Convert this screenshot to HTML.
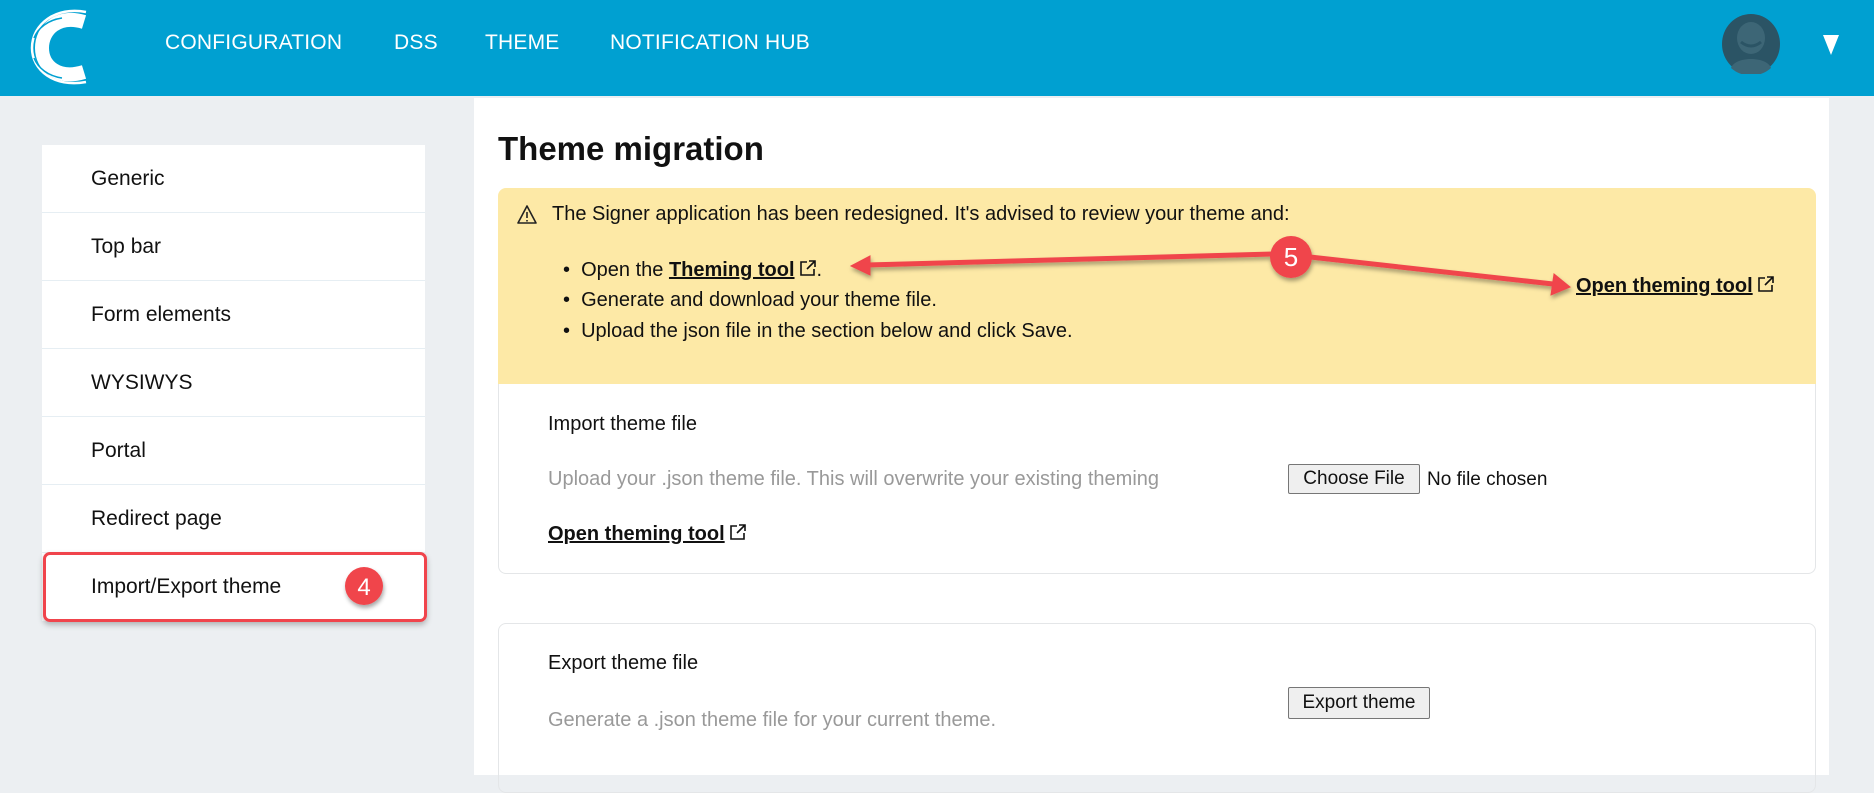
<!DOCTYPE html>
<html><head><meta charset="utf-8"><style>
*{box-sizing:border-box;margin:0;padding:0}
body{width:1874px;height:775px;overflow:hidden;background:#eceff2;font-family:"Liberation Sans",sans-serif;color:#111;position:relative}
.hdr{position:absolute;left:0;top:0;width:1874px;height:96px;background:#00a0d1}
.nav{position:absolute;top:31px;color:#fff;font-size:21px;letter-spacing:0.2px}
.side{position:absolute;left:42px;top:145px;width:383px;background:#fff}
.side div{height:68px;border-bottom:1px solid #e6eef3;font-size:21px;padding-left:49px;line-height:68px}
.main{position:absolute;left:474px;top:98px;width:1355px;height:677px;background:#fff}
.abs{position:absolute}
.alert{position:absolute;left:498px;top:188px;width:1318px;height:196px;background:#fde9a6;border-radius:8px 8px 0 0}
.t20{font-size:20px}
.card{position:absolute;left:498px;width:1318px;border:1px solid #e4e6e8;border-radius:8px}
a{color:#111;font-weight:bold;text-decoration:underline}
.btn{position:absolute;background:#efefef;border:1px solid #767676;border-radius:2px;font-size:19px;text-align:center}
.gray{color:#999;font-size:20px}
.ext{display:inline-block;vertical-align:-1px;margin-left:4px}
</style></head><body>
<div class="hdr">
<svg class="abs" style="left:28px;top:8px" width="64" height="78" viewBox="0 0 64 78">
<g fill="none" stroke="#fff" stroke-linecap="butt">
<path d="M56 14 C30 6 14 22 14 40 C14 58 30 72 56 64" stroke-width="14"/>
<path d="M58 4 C28 -2 4 16 4 40 C4 62 26 80 58 74" stroke-width="2.5"/>
</g>
<path d="M6 30 C10 20 20 12 34 10" stroke="#00a0d1" stroke-width="1.5" fill="none"/>
<path d="M6 50 C10 60 20 68 34 70" stroke="#00a0d1" stroke-width="1.5" fill="none"/>
</svg>
<div class="nav" style="left:165px">CONFIGURATION</div>
<div class="nav" style="left:394px">DSS</div>
<div class="nav" style="left:485px">THEME</div>
<div class="nav" style="left:610px">NOTIFICATION HUB</div>
<svg class="abs" style="left:1721px;top:14px" width="60" height="60"><ellipse cx="30" cy="30" rx="29" ry="30" fill="#2b5465"/><ellipse cx="30" cy="24" rx="14" ry="16" fill="#3d6676"/><path d="M20 28 Q30 36 40 28" stroke="#2b5465" stroke-width="3" fill="none"/><path d="M10 54 C14 42 46 42 50 54 A30 30 0 0 1 10 54Z" fill="#3d6676"/></svg>
<div class="abs" style="left:1823px;top:35px;width:0;height:0;border-left:8px solid transparent;border-right:8px solid transparent;border-top:20px solid #fff"></div>
</div>
<div class="side">
<div>Generic</div><div>Top bar</div><div>Form elements</div><div>WYSIWYS</div><div>Portal</div><div>Redirect page</div><div style="border:none">Import/Export theme</div>
</div>
<div class="main"></div>
<div class="abs" style="left:498px;top:130px;font-size:33px;font-weight:bold">Theme migration</div>
<div class="alert">
<svg class="abs" style="left:18px;top:16px" width="22" height="22" viewBox="0 0 22 22"><path d="M11 2 L20 19 H2Z" fill="none" stroke="#222" stroke-width="1.6" stroke-linejoin="round"/><path d="M11 8v6M11 16v1.5" stroke="#222" stroke-width="1.6"/></svg>
<div class="abs t20" style="left:54px;top:15px">The Signer application has been redesigned. It's advised to review your theme and:</div>
<div class="abs t20" style="left:65px;top:71px">•&nbsp; Open the <a>Theming tool</a><svg class="ext" width="18" height="18" viewBox="0 0 18 18"><path d="M8 3H2v13h13V10M10 2h6v6M16 2L8 10" fill="none" stroke="#111" stroke-width="1.6"/></svg>.</div>
<div class="abs t20" style="left:65px;top:101px">•&nbsp; Generate and download your theme file.</div>
<div class="abs t20" style="left:65px;top:132px">•&nbsp; Upload the json file in the section below and click Save.</div>
<div class="abs t20" style="left:1078px;top:87px"><a>Open theming tool</a><svg class="ext" width="18" height="18" viewBox="0 0 18 18"><path d="M8 3H2v13h13V10M10 2h6v6M16 2L8 10" fill="none" stroke="#111" stroke-width="1.6"/></svg></div>
</div>
<div class="card" style="top:384px;height:190px;border-top:none;border-radius:0 0 8px 8px">
<div class="abs t20" style="left:49px;top:29px">Import theme file</div>
<div class="abs gray" style="left:49px;top:84px">Upload your .json theme file. This will overwrite your existing theming</div>
<div class="btn" style="left:789px;top:80px;width:132px;height:30px;line-height:28px">Choose File</div>
<div class="abs" style="left:928px;top:85px;font-size:19px">No file chosen</div>
<div class="abs t20" style="left:49px;top:139px"><a>Open theming tool</a><svg class="ext" width="18" height="18" viewBox="0 0 18 18"><path d="M8 3H2v13h13V10M10 2h6v6M16 2L8 10" fill="none" stroke="#111" stroke-width="1.6"/></svg></div>
</div>
<div class="card" style="top:623px;height:170px">
<div class="abs t20" style="left:49px;top:28px">Export theme file</div>
<div class="btn" style="left:789px;top:63px;width:142px;height:32px;line-height:30px">Export theme</div>
<div class="abs gray" style="left:49px;top:85px">Generate a .json theme file for your current theme.</div>
</div>
<div class="abs" style="left:43px;top:552px;width:384px;height:70px;border:3px solid #f0444c;border-radius:7px;box-shadow:0 3px 6px rgba(0,0,0,.25)"></div>
<svg class="abs" style="left:0;top:0" width="1874" height="775">
<defs><filter id="s"><feDropShadow dx="1" dy="3" stdDeviation="2" flood-opacity=".35"/></filter></defs>
<g filter="url(#s)" stroke="#f0444c" stroke-width="5" fill="#f0444c">
<line x1="1273" y1="254" x2="866" y2="265"/>
<path d="M851 266 L870 256 L870 275Z" stroke-width="1"/>
<line x1="1310" y1="257" x2="1553" y2="284"/>
<path d="M1570 287 L1551 295 L1554 274Z" stroke-width="1"/>
<circle cx="1291" cy="257" r="21" stroke="none"/>
<circle cx="364" cy="586" r="19" stroke="none"/>
</g>
<text x="1291" y="266" fill="#fff" font-size="26" text-anchor="middle" font-family="Liberation Sans">5</text>
<text x="364" y="595" fill="#fff" font-size="24" text-anchor="middle" font-family="Liberation Sans">4</text>
</svg>
</body></html>
